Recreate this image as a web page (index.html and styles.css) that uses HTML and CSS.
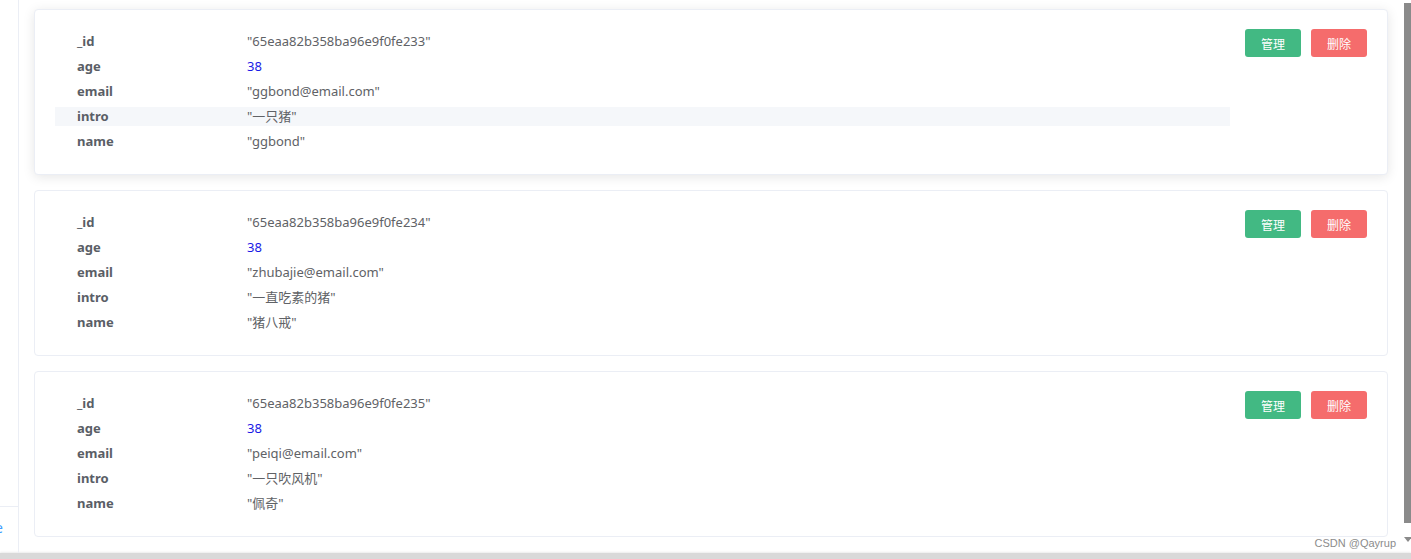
FILE: index.html
```html
<!DOCTYPE html>
<html lang="zh-CN">
<head>
  <meta charset="UTF-8" />
  <title>用户列表</title>
  <link rel="stylesheet" href="styles.css">
</head>
<body>

  <div class="screen">
    <aside class="sidebar">
      <div class="sidebar-foot"><span class="sidebar-link">e</span></div>
    </aside>

    <main class="list">
      <div class="card card-hover">
        <div class="fields">
          <div class="row"><span class="key">_id</span><span class="val">"65eaa82b358ba96e9f0fe233"</span></div>
          <div class="row"><span class="key">age</span><span class="val num">38</span></div>
          <div class="row"><span class="key">email</span><span class="val">"ggbond@email.com"</span></div>
          <div class="row active"><span class="key">intro</span><span class="val">"一只猪"</span></div>
          <div class="row"><span class="key">name</span><span class="val">"ggbond"</span></div>
        </div>
        <div class="actions">
          <button class="btn btn-manage">管理</button>
          <button class="btn btn-delete">删除</button>
        </div>
      </div>

      <div class="card">
        <div class="fields">
          <div class="row"><span class="key">_id</span><span class="val">"65eaa82b358ba96e9f0fe234"</span></div>
          <div class="row"><span class="key">age</span><span class="val num">38</span></div>
          <div class="row"><span class="key">email</span><span class="val">"zhubajie@email.com"</span></div>
          <div class="row"><span class="key">intro</span><span class="val">"一直吃素的猪"</span></div>
          <div class="row"><span class="key">name</span><span class="val">"猪八戒"</span></div>
        </div>
        <div class="actions">
          <button class="btn btn-manage">管理</button>
          <button class="btn btn-delete">删除</button>
        </div>
      </div>

      <div class="card">
        <div class="fields">
          <div class="row"><span class="key">_id</span><span class="val">"65eaa82b358ba96e9f0fe235"</span></div>
          <div class="row"><span class="key">age</span><span class="val num">38</span></div>
          <div class="row"><span class="key">email</span><span class="val">"peiqi@email.com"</span></div>
          <div class="row"><span class="key">intro</span><span class="val">"一只吹风机"</span></div>
          <div class="row"><span class="key">name</span><span class="val">"佩奇"</span></div>
        </div>
        <div class="actions">
          <button class="btn btn-manage">管理</button>
          <button class="btn btn-delete">删除</button>
        </div>
      </div>
    </main>

    <div class="vscroll">
      <div class="vscroll-thumb"></div>
      <div class="vscroll-arrow"></div>
    </div>
  </div>

  <div class="hscroll"></div>

  <div class="watermark">CSDN @Qayrup</div>

</body>
</html>
```

FILE: styles.css
```css
html, body {
  margin: 0;
  height: 559px;
  overflow: hidden;
}
body {
  font-family: "Noto Sans", "Noto Sans CJK SC", sans-serif;
  font-size: 13px;
  color: #606266;
  background: #fff;
  position: relative;
}
.screen {
  display: flex;
  height: 553px;
}
.sidebar {
  width: 18px;
  flex-shrink: 0;
  border-right: 1px solid #ebeef5;
  display: flex;
  flex-direction: column;
  justify-content: flex-end;
}
.sidebar-foot {
  height: 46px;
  border-top: 1px solid #ebeef5;
  overflow: hidden;
}
.sidebar-link {
  display: block;
  color: #409eff;
  font-size: 14px;
  margin-left: -5px;
  margin-top: 11px;
}
.list {
  flex: 1;
  padding: 9px 16px 0 15px;
  display: flex;
  flex-direction: column;
  gap: 15px;
}
.card {
  display: flex;
  gap: 15px;
  padding: 19px 20px 23px;
  border: 1px solid #ebeef5;
  border-radius: 4px;
  background: #fff;
}
.card-hover {
  box-shadow: 0 2px 12px 0 rgba(0,0,0,0.1);
}
.fields {
  flex: 1;
  display: flex;
  flex-direction: column;
  gap: 6px;
  padding-top: 3px;
}
.row {
  display: flex;
  height: 19px;
  line-height: 19px;
  padding-left: 22px;
}
.row.active {
  background: #f5f7fa;
}
.key {
  width: 170px;
  font-weight: 700;
  color: #5a5e66;
}
.val.num {
  color: #1a1ae6;
}
.actions {
  display: flex;
  gap: 10px;
  align-items: flex-start;
}
.btn {
  width: 56px;
  height: 28px;
  border: none;
  border-radius: 3px;
  color: #fff;
  font-family: "Noto Sans CJK SC", sans-serif;
  font-size: 12px;
  cursor: pointer;
}
.btn-manage {
  background: #42b983;
}
.btn-delete {
  background: #f56c6c;
}
.vscroll {
  width: 7px;
  flex-shrink: 0;
  display: flex;
  flex-direction: column;
  align-items: center;
}
.vscroll-thumb {
  width: 7px;
  margin-top: 3px;
  height: 520px;
  background: #8a8a8a;
}
.vscroll-arrow {
  margin-top: 14px;
  width: 0;
  height: 0;
  border-left: 4px solid transparent;
  border-right: 4px solid transparent;
  border-top: 5px solid #8a8a8a;
}
.hscroll {
  height: 6px;
  background: #d9d9d9;
  box-shadow: 0 -1px 2px rgba(0,0,0,0.08);
}
.watermark {
  position: absolute;
  right: 15px;
  bottom: 10px;
  font-family: "Liberation Sans", Arial, sans-serif;
  font-size: 11px;
  color: #8c8c8c;
}
```
